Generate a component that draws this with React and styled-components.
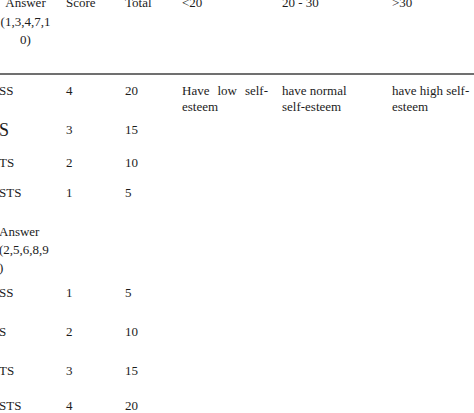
import React from "react"
import styled, { createGlobalStyle } from "styled-components"

const GlobalStyle = createGlobalStyle`
  html, body {
    margin: 0;
    padding: 0;
    background: #ffffff;
    overflow: hidden;
  }
  body {
    font-family: "Liberation Serif", "Times New Roman", serif;
    color: #1c1c1c;
  }
`

const TableWrapper = styled.div`
  width: 476px;
  margin: -6px 0 0 -1px;
  font-size: 13px;
`

const Row = styled.div`
  display: grid;
  grid-template-columns: 67px 59px 57px 100px 110px 1fr;
  height: ${props => props.h}px;
  padding-top: ${props => props.pt || 0}px;
  line-height: ${props => props.lh || 16}px;
  align-items: start;
`

const HeaderRow = styled(Row)`
  line-height: 18.5px;
  border-bottom: 2px solid #707070;
`

const Cell = styled.div`
  width: ${props => (props.w ? `${props.w}px` : "auto")};
  text-align: ${props => props.align || "left"};
  overflow-wrap: anywhere;
`

const BigLetter = styled.span`
  font-size: 18px;
`

const firstRows = [
  { label: "SS", score: 4, total: 20, h: 39, pt: 8 },
  { label: "S", score: 3, total: 15, h: 33, big: true },
  { label: "TS", score: 2, total: 10, h: 30 },
  { label: "STS", score: 1, total: 5, h: 38 },
]

const secondRows = [
  { label: "SS", score: 1, total: 5, h: 39 },
  { label: "S", score: 2, total: 10, h: 39 },
  { label: "TS", score: 3, total: 15, h: 35 },
  { label: "STS", score: 4, total: 20, h: 16 },
]

const ScoreRow = ({ row, children }) => (
  <Row h={row.h} pt={row.pt}>
    <Cell>{row.big ? <BigLetter>{row.label}</BigLetter> : row.label}</Cell>
    <Cell>{row.score}</Cell>
    <Cell>{row.total}</Cell>
    {children}
  </Row>
)

const App = () => {
  return (
    <>
      <GlobalStyle />
      <TableWrapper>
        <HeaderRow h={79}>
          <Cell w={53} align="center">Answer (1,3,4,7,10)</Cell>
          <Cell>Score</Cell>
          <Cell>Total</Cell>
          <Cell>&lt;20</Cell>
          <Cell>20 - 30</Cell>
          <Cell>&gt;30</Cell>
        </HeaderRow>

        {firstRows.map((row, i) => (
          <ScoreRow key={`a${i}`} row={row}>
            {i === 0 && (
              <>
                <Cell w={86} align="justify">Have low self-esteem</Cell>
                <Cell w={85}>have normal self-esteem</Cell>
                <Cell w={81}>have high self-esteem</Cell>
              </>
            )}
          </ScoreRow>
        ))}

        <Row h={62} lh={18}>
          <Cell w={52}>Answer (2,5,6,8,9)</Cell>
        </Row>

        {secondRows.map((row, i) => (
          <ScoreRow key={`b${i}`} row={row} />
        ))}
      </TableWrapper>
    </>
  )
}

export default App
